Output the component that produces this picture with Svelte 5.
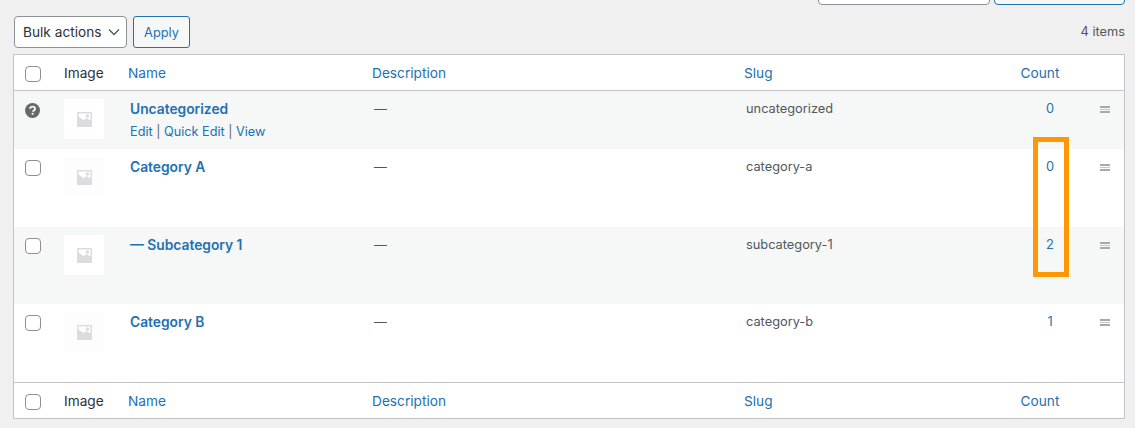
<script>
  const rows = [
    { name: 'Uncategorized', slug: 'uncategorized', count: 0, alt: true, isDefault: true, actions: true, h: 58 },
    { name: 'Category A', slug: 'category-a', count: 0, alt: false, h: 78 },
    { name: '— Subcategory 1', slug: 'subcategory-1', count: 2, alt: true, h: 77 },
    { name: 'Category B', slug: 'category-b', count: 1, alt: false, h: 78 }
  ];
</script>

{#snippet headRow(cls)}
  <tr class={cls}>
    <th class="c-check"><span class="box"></span></th>
    <th class="plain">Image</th>
    <th><a href="#n">Name</a></th>
    <th><a href="#d">Description</a></th>
    <th><a href="#s">Slug</a></th>
    <th class="c-count"><a href="#c">Count</a></th>
    <th></th>
  </tr>
{/snippet}

<div class="page">
  <div class="clip">
    <span class="clipped"></span>
    <span class="clipped primary"></span>
  </div>
  <div class="bar">
    <div class="select">Bulk actions
      <svg width="12" height="8" viewBox="0 0 12 8" aria-hidden="true"><path d="M1 1.500 6 6.500 11 1.500" fill="none" stroke="#50575e" stroke-width="1.300"/></svg>
    </div>
    <button class="apply">Apply</button>
    <span class="items">4 items</span>
  </div>
  <table>
    <colgroup>
      <col style="width:42px" /><col style="width:64px" /><col style="width:244px" />
      <col style="width:372px" /><col style="width:277px" /><col style="width:74px" /><col />
    </colgroup>
    <thead>{@render headRow('head')}</thead>
    <tbody>
      {#each rows as r}
        <tr class:alt={r.alt} style="height:{r.h}px">
          <td class="c-check">
            {#if r.isDefault}
              <svg class="help" width="15" height="15" viewBox="0 0 16 16" aria-hidden="true"><circle cx="8" cy="8" r="8" fill="#646970"/><path d="M5.400 6.200C5.500 4.700 6.600 3.800 8.100 3.800c1.500 0 2.600.9 2.600 2.200 0 1-.6 1.500-1.300 2-.7.5-.9.800-.9 1.400" fill="none" stroke="#fff" stroke-width="1.900"/><rect x="7.100" y="10.500" width="2" height="2" fill="#fff"/></svg>
            {:else}
              <span class="box"></span>
            {/if}
          </td>
          <td class="c-thumb">
            <div class="thumb">
              <svg width="15" height="15" viewBox="0 0 15 15" aria-hidden="true"><rect width="15" height="15" fill="#dcdcde"/><path d="M1.500 1.500h12v7L9.500 6 6.500 8 1.500 4.500z" fill="#fff"/><circle cx="10.500" cy="4" r="1.800" fill="#dcdcde"/></svg>
            </div>
          </td>
          <td class="c-name">
            <a class="title" href="#t">{r.name}</a>
            {#if r.actions}
              <div class="actions"><a href="#e">Edit</a> | <a href="#q">Quick Edit</a> | <a href="#v">View</a></div>
            {/if}
          </td>
          <td class="c-desc">—</td>
          <td class="c-slug">{r.slug}</td>
          <td class="c-num"><a href="#p">{r.count}</a></td>
          <td class="c-handle"><span class="handle"></span></td>
        </tr>
      {/each}
    </tbody>
    <tfoot>{@render headRow('foot')}</tfoot>
  </table>
  <div class="mark"></div>
</div>

<style>
  :global(body) {
    margin: 0;
    background: #f0f0f1;
  }
  .page {
    position: relative;
    width: 1135px;
    height: 428px;
    overflow: hidden;
    box-sizing: border-box;
    padding: 0 10px 0 13px;
    font-family: Inter, "Noto Sans", sans-serif;
    font-size: 12.800px;
    color: #50575e;
  }
  a {
    color: #2271b1;
    text-decoration: none;
  }
  .clip {
    height: 5px;
    display: flex;
    justify-content: flex-end;
    align-items: flex-end;
    gap: 4px;
    overflow: hidden;
  }
  .clipped {
    flex: none;
    width: 170px;
    height: 30px;
    background: #fff;
    border: 1px solid #8c8f94;
    border-radius: 4px;
  }
  .clipped.primary {
    width: 129px;
    background: #f6f7f7;
    border-color: #2271b1;
  }
  .bar {
    height: 49px;
    display: flex;
    align-items: flex-start;
    padding: 11px 0 0 1px;
    box-sizing: border-box;
  }
  .select {
    box-sizing: border-box;
    width: 113px;
    height: 32px;
    background: #fff;
    border: 1px solid #8c8f94;
    border-radius: 4px;
    display: flex;
    align-items: center;
    justify-content: space-between;
    padding: 0 6px 0 8px;
    font-size: 13.700px;
    color: #2c3338;
  }
  .apply {
    box-sizing: border-box;
    margin-left: 6px;
    width: 57px;
    height: 32px;
    background: #f6f7f7;
    border: 1px solid #2271b1;
    border-radius: 3px;
    color: #2271b1;
    font: inherit;
    padding: 0;
  }
  .items {
    margin-left: auto;
    margin-top: 8px;
    line-height: 16px;
    color: #50575e;
  }
  table {
    width: 1112px;
    table-layout: fixed;
    border-collapse: separate;
    border-spacing: 0;
    background: #fff;
    border: 1px solid #c3c4c7;
    box-sizing: border-box;
  }
  th {
    padding: 0 8px;
    text-align: left;
    font-weight: 400;
    font-size: 13.700px;
    box-sizing: border-box;
  }
  .head th {
    border-bottom: 1px solid #c3c4c7;
    height: 36px;
  }
  .foot th {
    border-top: 1px solid #c3c4c7;
    height: 36px;
  }
  .plain {
    color: #2c3338;
  }
  td {
    vertical-align: top;
    padding: 0 10px;
    line-height: 18px;
    box-sizing: border-box;
  }
  tr.alt td {
    background: #f6f7f7;
  }
  th.c-check {
    padding: 11px 0 0 11px;
    vertical-align: top;
  }
  td.c-check {
    padding: 11px 0 0 11px;
  }
  .box {
    display: block;
    box-sizing: border-box;
    width: 16px;
    height: 16px;
    background: #fff;
    border: 1px solid #8c8f94;
    border-radius: 4px;
  }
  .help {
    display: block;
    margin-top: 1px;
  }
  td.c-thumb {
    padding: 8px 0 0 8px;
  }
  .thumb {
    width: 40px;
    height: 40px;
    background: #fdfdfd;
    display: flex;
    align-items: center;
    justify-content: center;
  }
  tr.alt .thumb {
    background: #fff;
  }
  td.c-name {
    padding-top: 9px;
  }
  .title {
    font-size: 13.800px;
    font-weight: 600;
  }
  .actions {
    margin-top: 4px;
    font-size: 12.700px;
    line-height: 17px;
    color: #646970;
  }
  .c-desc,
  .c-slug {
    padding-top: 9px;
  }
  .c-num {
    text-align: center;
    padding: 9px 0 0 0;
  }
  .c-count {
    text-align: center;
    padding: 0 20px 0 0;
  }
  .c-handle {
    padding: 8px 0 0 13px;
  }
  .handle {
    display: block;
    box-sizing: border-box;
    width: 10px;
    height: 7px;
    margin-top: 7px;
    border-top: 2px solid #a7aaad;
    border-bottom: 2px solid #a7aaad;
    background: linear-gradient(#c3c4c7, #c3c4c7) center / 100% 1px no-repeat;
  }
  .mark {
    position: absolute;
    left: 1033px;
    top: 137px;
    width: 36px;
    height: 140px;
    box-sizing: border-box;
    border: 5px solid #ff9800;
  }
</style>
